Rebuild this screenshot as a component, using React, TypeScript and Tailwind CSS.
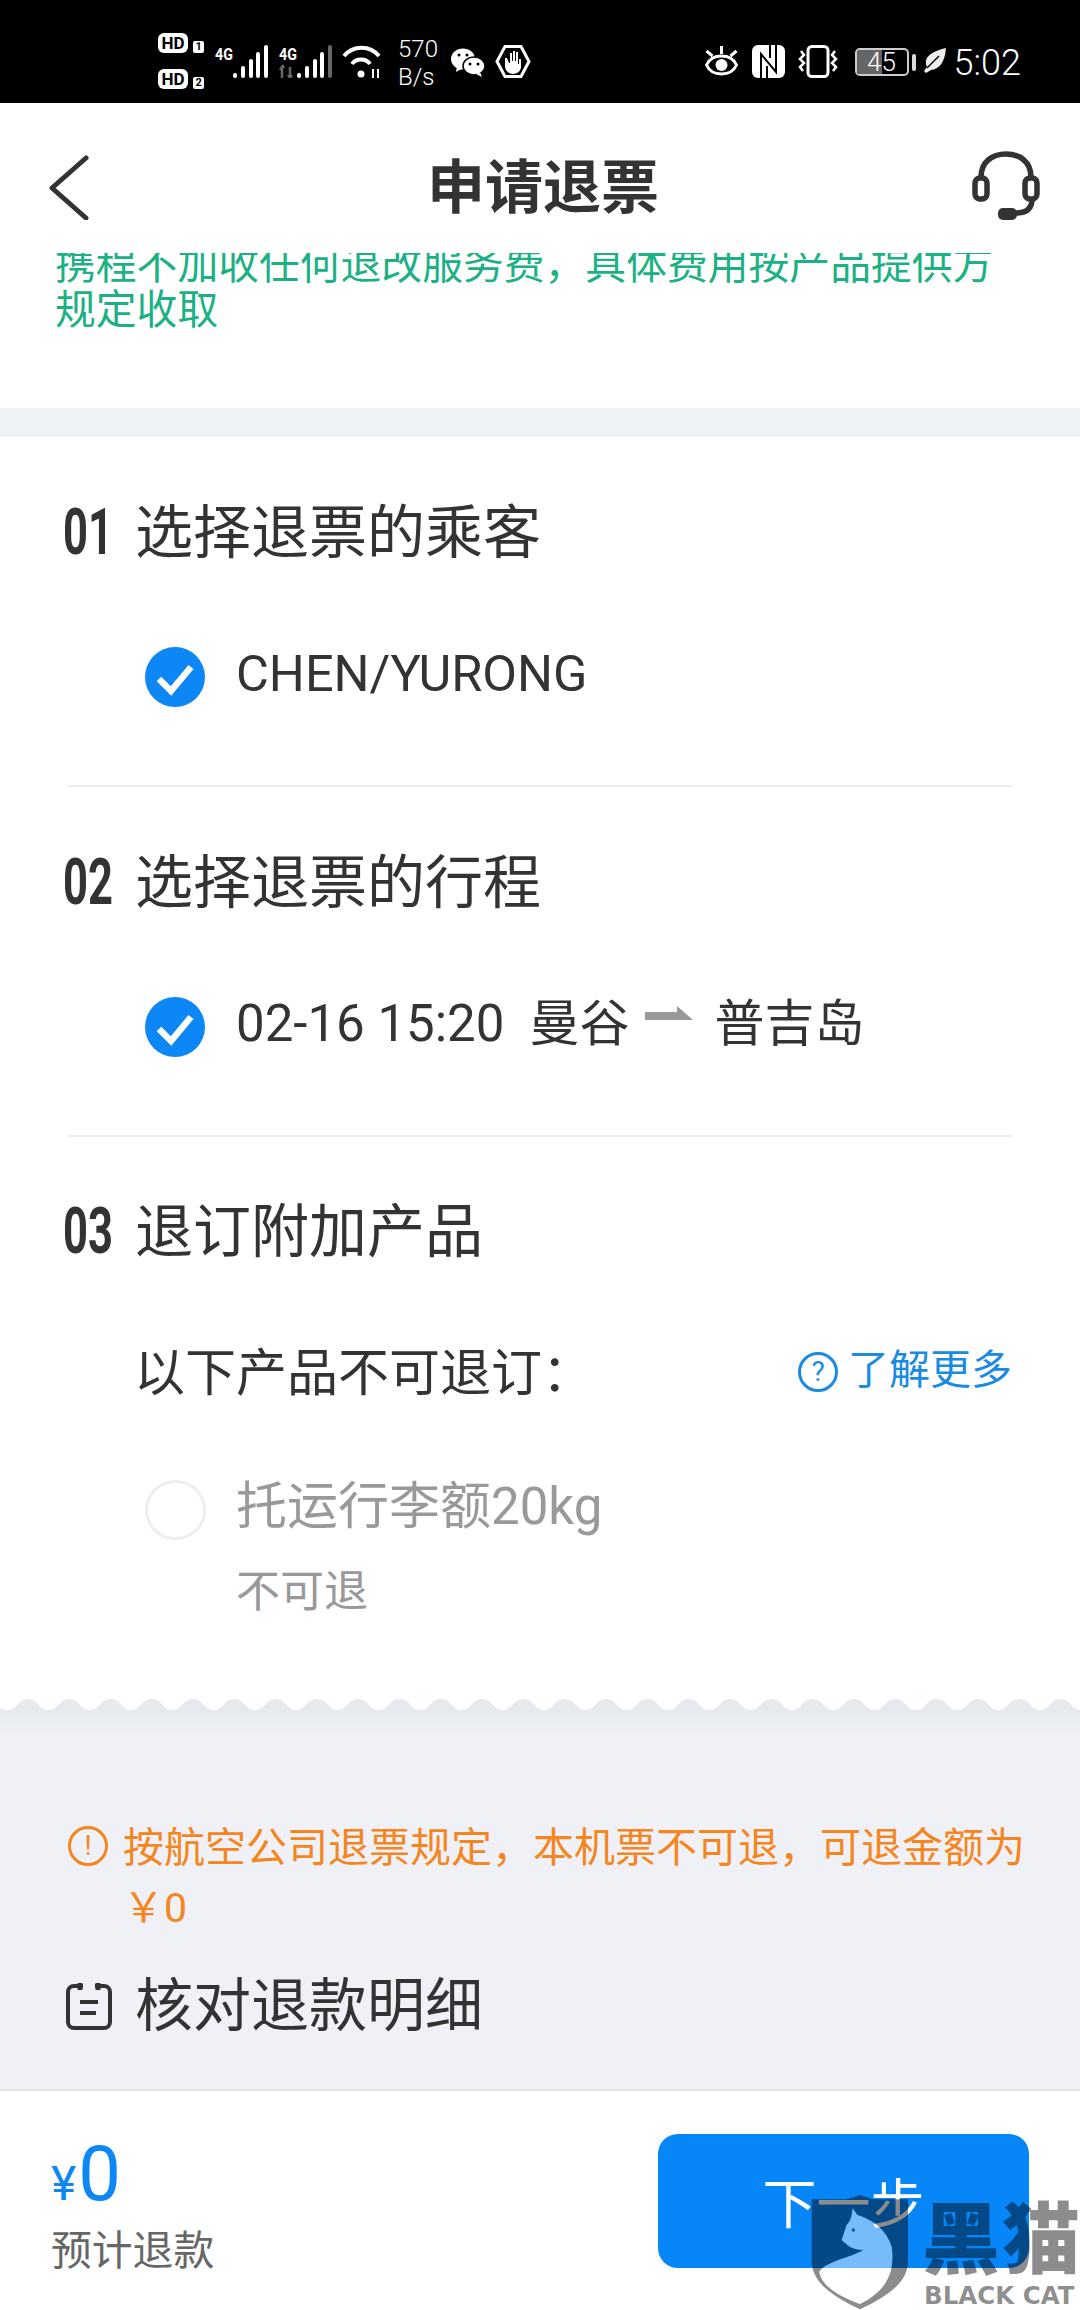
import React from "react";

// small drawn glyphs for the status bar
function Signal({ dim }: { dim?: boolean }) {
  return (
    <svg width="53" height="33" viewBox="0 0 53 33" className="mt-[45px] ml-[11px] first:ml-[13px]">
      <text x="0" y="15" fontSize="17" fontWeight="700" fill="#fff" textLength="18" lengthAdjust="spacingAndGlyphs">4G</text>
      {dim && <path d="M3 33V23M3 22l-2 3M5 23l-2-3M11 22V32M11 33l-2-3M13 30l-2 3" stroke="#666" strokeWidth="2.500" fill="none" />}
      <rect x="18" y="28" width="4" height="5" rx="2" fill="#fff" />
      <rect x="26" y="21" width="4" height="12" rx="2" fill="#fff" />
      <rect x="34" y="14" width="4" height="19" rx="2" fill="#fff" />
      <rect x="41" y="7" width="4" height="26" rx="2" fill="#fff" />
      <rect x="49" y="0" width="4" height="33" rx="2" fill={dim ? "#666" : "#fff"} />
    </svg>
  );
}

function HdRow({ n }: { n: string }) {
  return (
    <div className="flex items-end gap-[5px]">
      <span className="w-[31px] h-[20px] bg-white rounded-[6px] text-black text-[17px] leading-[20px] font-bold text-center">HD</span>
      <span className="w-[11px] h-[12px] bg-white rounded-[2px] text-black text-[11px] leading-[12px] font-bold text-center">{n}</span>
    </div>
  );
}

function StatusBar() {
  return (
    <div className="h-[103px] bg-black flex items-start pl-[158px] pr-[59px] text-white shrink-0">
      <div className="flex flex-col gap-[16px] mt-[33px] w-[46px]">
        <HdRow n="1" />
        <HdRow n="2" />
      </div>
      <Signal />
      <Signal dim />
      <svg width="41" height="33" viewBox="0 0 41 33" className="mt-[45px] ml-[10px]" fill="none" stroke="#fff" strokeWidth="4">
        <path d="M2 11C11 0 28 0 37 11" />
        <path d="M10 19C14 13 24 13 28 19" />
        <circle cx="19" cy="29" r="3.500" fill="#fff" stroke="none" />
        <path d="M31 24v9M36 24v9" strokeWidth="2" />
      </svg>
      <div className="ml-[15px] mt-[35px] w-[37px] text-[24px] leading-[28px] font-light whitespace-nowrap">
        <div>570</div>
        <div>B/s</div>
      </div>
      <svg width="34" height="29" viewBox="0 0 34 29" className="mt-[48px] ml-[16px]" fill="#fff">
        <ellipse cx="12" cy="11" rx="12" ry="10.500" />
        <path d="M6 18l-1 6 7-4z" />
        <ellipse cx="23" cy="18" rx="11" ry="9" stroke="#000" strokeWidth="1.500" />
        <path d="M29 24l2 5-6-3z" />
        <circle cx="8" cy="7" r="1.500" fill="#000" />
        <circle cx="16" cy="7" r="1.500" fill="#000" />
        <circle cx="19" cy="16" r="1.500" fill="#000" />
        <circle cx="27" cy="16" r="1.500" fill="#000" />
      </svg>
      <svg width="36" height="33" viewBox="0 0 36 33" className="mt-[45px] ml-[10px]">
        <path d="M10 1.500h16l8 15-8 15H10L2 16.500z" fill="none" stroke="#fff" strokeWidth="3" />
        <path d="M10 13v8c0 5 4 8 8 8s8-3 8-7v-8h-2v5h-1V7h-2v9h-1V6h-2v10h-1V8h-2v10h-1l-2-5z" fill="#fff" />
      </svg>

      <div className="ml-auto flex items-start">
        <svg width="35" height="31" viewBox="0 0 35 31" fill="none" stroke="#fff" strokeWidth="3" className="mt-[45px]">
          <path d="M2.500 20C8 8 27 8 32.500 20C27 32 8 32 2.500 20z" />
          <circle cx="17.500" cy="20" r="6" fill="#fff" stroke="none" />
          <path d="M17.500 1v8M2.500 6l6 5M32.500 6l-6 5" />
        </svg>
        <svg width="33" height="33" viewBox="0 0 33 33" className="mt-[45px] ml-[13px]">
          <rect width="33" height="33" rx="6" fill="#fff" />
          <path d="M9 33V9L24 27V0M15 33V21M18 0V13" stroke="#000" strokeWidth="2" fill="none" />
        </svg>
        <svg width="42" height="33" viewBox="0 0 42 33" fill="none" stroke="#fff" strokeWidth="2.500" className="mt-[45px] ml-[12px]">
          <rect x="11" y="1.500" width="20" height="30" rx="4" strokeWidth="3" />
          <path d="M4 6l3 4-4 4 4 4-4 4 3 4M38 6l-3 4 4 4-4 4 4 4-3 4" />
        </svg>
        <div className="ml-[16px] mt-[48px] flex items-center">
          <div className="w-[54px] h-[28px] border-2 border-[#ccc] rounded-[5px] relative overflow-hidden text-center text-[26px] leading-[24px] font-light">
            <div className="absolute inset-y-0 left-0 w-[25px] bg-[#666]" />
            <span className="relative">45</span>
          </div>
          <div className="ml-[3px] w-[4px] h-[17px] bg-[#ddd] rounded-[2px]" />
        </div>
        <svg width="23" height="25" viewBox="0 0 23 25" className="mt-[48px] ml-[7px]" fill="#eee">
          <path d="M23 0C22 12 18 21 8 22L3 25L1 23L4 19C-1 9 10 3 23 0z" />
          <path d="M4 20L16 8" stroke="#000" strokeWidth="1.500" />
        </svg>
        <div className="ml-[8px] mt-[41px] text-[36px] leading-[45px] font-light">5:02</div>
      </div>
    </div>
  );
}

function Check() {
  return (
    <svg width="60" height="60" viewBox="0 0 60 60" className="shrink-0">
      <circle cx="30" cy="30" r="30" fill="#0d87f5" />
      <path d="M14 32L26 44L46 20" stroke="#fff" strokeWidth="6.500" fill="none" />
    </svg>
  );
}

function StepHeading({ num, title }: { num: string; title: string }) {
  return (
    <div className="h-[68px] flex items-center pl-[63px]">
      <span className="w-[72px] text-[64px] leading-[68px] font-bold text-[#333] origin-left scale-x-[.68] whitespace-nowrap">{num}</span>
      <span className="text-[58px] leading-[68px] text-[#333]">{title}</span>
    </div>
  );
}

function Divider() {
  return <div className="mx-[68px] h-[2px] bg-[#ececec]" />;
}

function Watermark() {
  return (
    <div className="absolute left-[810px] top-[2195px] flex items-start">
      <svg width="100" height="115" viewBox="330 285 300 345" className="shrink-0">
        <path
          fillRule="evenodd"
          fill="#000"
          fillOpacity=".45"
          d="M335 298L440 298L480 285L520 298L624 298L624 490C620 550 560 590 480 628C400 590 340 550 335 490Z M458 325L472 345C520 360 560 390 575 440C585 510 565 570 480 612C420 590 365 560 358 515C385 480 450 475 490 450C460 450 445 440 425 420L440 375C455 360 455 345 458 325Z"
        />
        <path
          fill="#fff"
          fillOpacity=".45"
          d="M458 325L472 345C520 360 560 390 575 440C585 510 565 570 480 612C420 590 365 560 358 515C385 480 450 475 490 450C460 450 445 440 425 420L440 375C455 360 455 345 458 325Z"
        />
        <circle cx="460" cy="390" r="5" fill="#0f5599" />
      </svg>
      <div className="ml-[12px] mt-[5px] text-black/45 font-bold">
        <div className="text-[78px] tracking-[2px] leading-[83px] whitespace-nowrap font-black">黑猫</div>
        <div className="ml-[2px] text-[24.500px] leading-[26px] whitespace-nowrap font-['DejaVu_Sans',sans-serif]">BLACK CAT</div>
      </div>
    </div>
  );
}

export default function App() {
  return (
    <div className="relative w-[1080px] h-[2310px] overflow-hidden bg-white flex flex-col font-['Roboto','Noto_Sans_CJK_SC',sans-serif]">
      <StatusBar />

      {/* header */}
      <div className="h-[150px] pt-[20px] pl-[50px] pr-[40px] flex items-center justify-between shrink-0">
        <div className="w-[64px]">
          <svg width="40" height="66" viewBox="0 0 40 66" fill="none" stroke="#333" strokeWidth="5" strokeLinecap="round" strokeLinejoin="round" className="-mt-[2px] -ml-[1px]">
            <path d="M37 4L3 34L37 64" />
          </svg>
        </div>
        <div className="text-[58px] leading-[70px] font-bold text-[#333]">申请退票</div>
        <svg width="68" height="70" viewBox="0 0 68 70" fill="none" stroke="#333" strokeWidth="5.500" className="-mt-[5px]">
          <path d="M9 28V26C9 11 20 3 34 3S59 11 59 26V28" />
          <rect x="3" y="27" width="12" height="21" rx="5" />
          <rect x="53" y="27" width="12" height="21" rx="5" />
          <path d="M60 48C60 58 54 62 44 62" />
          <rect x="26" y="57" width="19" height="12" rx="5" fill="#333" stroke="none" />
        </svg>
      </div>

      {/* notice is cut off by the header, scrolled state */}
      <div className="h-[155px] overflow-hidden pl-[55px] shrink-0">
        <div className="-mt-[10px] w-[960px] text-[40.800px] leading-[45px] text-[#1bb184]">
          携程不加收任何退改服务费，具体费用按产品提供方规定收取
        </div>
      </div>

      <div className="h-[29px] bg-[#eef1f5] shrink-0" />

      <div className="pt-[62px]">
        <StepHeading num="01" title="选择退票的乘客" />
      </div>
      <div className="mt-[80px] h-[60px] pl-[145px] flex items-center">
        <Check />
        <span className="ml-[31px] -mt-[6px] text-[50.500px] leading-[60px] text-[#333]">CHEN/YURONG</span>
      </div>
      <div className="mt-[78px]">
        <Divider />
      </div>

      <div className="pt-[62px]">
        <StepHeading num="02" title="选择退票的行程" />
      </div>
      <div className="mt-[80px] h-[60px] pl-[145px] flex items-center text-[#333] text-[51px] leading-[60px] whitespace-nowrap">
        <Check />
        <span className="ml-[31px] -mt-[6px]">02-16 15:20</span>
        <span className="ml-[25px] -mt-[6px] text-[50px]">曼谷</span>
        <svg width="48" height="14" viewBox="0 0 48 14" className="ml-[16px] -mt-[28px]">
          <path d="M0 6H32V0L48 14H0Z" fill="#999" />
        </svg>
        <span className="ml-[21px] -mt-[6px] text-[50px]">普吉岛</span>
      </div>
      <div className="mt-[78px]">
        <Divider />
      </div>

      <div className="pt-[61px]">
        <StepHeading num="03" title="退订附加产品" />
      </div>

      <div className="mt-[76px] h-[60px] pl-[134px] pr-[68px] flex items-center justify-between">
        <span className="mt-[3px] text-[51px] leading-[60px] text-[#333]">以下产品不可退订：</span>
        <div className="flex items-center text-[#1a8ae2]">
          <span className="w-[40px] h-[40px] rounded-full border-[3px] border-[#1a8ae2] text-[28px] leading-[34px] text-center">?</span>
          <span className="ml-[10px] -mt-[4px] text-[41px] leading-[50px]">了解更多</span>
        </div>
      </div>

      <div className="mt-[78px] h-[60px] pl-[145px] flex items-center">
        <div className="w-[61px] h-[60px] rounded-full border-[3px] border-[#eeeeee] shrink-0" />
        <span className="ml-[30px] -mt-[6px] text-[51px] leading-[60px] text-[#999] whitespace-nowrap">托运行李额20kg</span>
      </div>
      <div className="mt-[27px] pl-[236px] text-[44px] leading-[50px] text-[#999]">不可退</div>

      {/* scalloped edge */}
      <svg width="1080" height="11" viewBox="0 0 1080 11" className="mt-[82px] shrink-0 block">
        <defs>
          <pattern id="scallop" x="7.350" y="0" width="41.300" height="11" patternUnits="userSpaceOnUse">
            <path d="M0 11C10 11 10 0 20.650 0S31 11 41.300 11Z" fill="#e6e9ed" />
          </pattern>
        </defs>
        <rect width="1080" height="11" fill="url(#scallop)" />
      </svg>

      <div className="flex-1 bg-gradient-to-b from-[#e6e9ed] to-[#eff1f6] to-[30px] pt-[108px] flex flex-col border-b-2 border-[#e2e2e2]">
        <div className="flex items-start pl-[68px]">
          <span className="mt-[8px] w-[40px] h-[40px] shrink-0 rounded-full border-[3px] border-[#f5861f] text-[#f5861f] text-[28px] leading-[34px] text-center">!</span>
          <div className="ml-[15px] w-[910px] text-[41px] leading-[60px] text-[#f5861f]">
            按航空公司退票规定，本机票不可退，可退金额为￥0
          </div>
        </div>
        <div className="mt-[34px] h-[68px] pl-[66px] flex items-center">
          <svg width="46" height="48" viewBox="0 0 46 48" fill="none" stroke="#333" strokeWidth="4">
            <rect x="2" y="4" width="42" height="42" rx="6" />
            <path d="M14 1V8M32 1V8" strokeWidth="5" />
            <path d="M17 4H29" stroke="#eff1f6" strokeWidth="5" />
            <path d="M14 20H32M14 31H30" strokeWidth="4" />
          </svg>
          <span className="ml-[23px] text-[58px] leading-[68px] text-[#333]">核对退款明细</span>
        </div>
      </div>

      {/* footer */}
      <div className="h-[219px] shrink-0 pl-[51px] pr-[51px] pt-[43px] flex items-start justify-between">
        <div>
          <div className="flex items-baseline text-[#0d87f5] h-[80px] leading-[80px]">
            <span className="text-[48px]">¥</span>
            <span className="ml-[2px] text-[76px]">0</span>
          </div>
          <div className="mt-[12px] text-[40.800px] leading-[50px] text-[#666]">预计退款</div>
        </div>
        <div className="w-[371px] h-[134px] rounded-[20px] bg-[#0786f7] text-white text-[54px] flex items-center justify-center pt-[8px]">下一步</div>
      </div>

      <Watermark />
    </div>
  );
}
